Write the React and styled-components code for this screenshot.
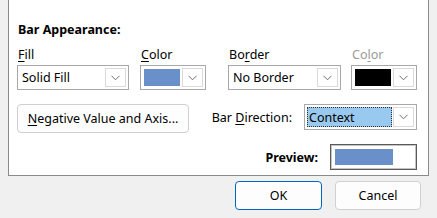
import React from "react";
import styled, { createGlobalStyle } from "styled-components";

const Global = createGlobalStyle`
  html, body { margin: 0; padding: 0; background: #f0f0f0; }
  body { font-family: "Segoe UI", "Noto Sans", "Open Sans", sans-serif; font-size: 12px; color: #000; }
`;

const Window = styled.div`
  width: 437px;
  height: 218px;
  background: #f0f0f0;
  overflow: hidden;
`;

const Panel = styled.div`
  margin-left: 8px;
  width: 421px;
  height: 176px;
  box-sizing: border-box;
  background: #fff;
  border: 1px solid #8a8a8a;
  border-top: none;
  padding: 22px 11px 0 8px;
  display: flex;
  flex-direction: column;
`;

const Heading = styled.div`
  font-weight: 700;
  font-size: 12.5px;
  line-height: 16px;
  margin-left: 1px;
`;

const FieldGrid = styled.div`
  display: grid;
  grid-template-columns: 123px 88px 123px 65px;
  margin-top: 9px;
`;

const Field = styled.div`
  display: flex;
  flex-direction: column;
  gap: 3px;
`;

const Label = styled.div`
  font-size: 12.5px;
  line-height: 15px;
  margin-left: 1px;
  color: ${(p) => (p.$disabled ? "#9a9a9a" : "#000")};
  u { text-decoration: underline; text-underline-offset: 2px; }
`;

const Combo = styled.div`
  width: ${(p) => p.$w}px;
  height: ${(p) => p.$h || 25}px;
  box-sizing: border-box;
  border: 1px solid #a8a8a8;
  background: #fff;
  display: flex;
  align-items: stretch;
  padding: 2px;
  gap: 1px;
`;

const ComboText = styled.div`
  flex: 1;
  display: flex;
  align-items: center;
  padding-left: 2px;
  font-size: 12.5px;
  white-space: nowrap;
  box-sizing: border-box;
  ${(p) =>
    p.$selected &&
    `background: #99c9ef; outline: 1px dotted #333; outline-offset: -1px;`}
`;

const Swatch = styled.div`
  flex: 1;
  background: ${(p) => p.$color};
  margin: 1px;
`;

const DropBtn = styled.div`
  width: 21px;
  box-sizing: border-box;
  border: 1px solid #dadada;
  display: flex;
  align-items: center;
  justify-content: center;
`;

const Chevron = () => (
  <svg width="9" height="6" viewBox="0 0 9 6">
    <path d="M0.5 0.8 L4.5 4.8 L8.5 0.8" fill="none" stroke="#6d6d6d" strokeWidth="1" />
  </svg>
);

const Row = styled.div`
  display: flex;
  align-items: flex-start;
  justify-content: space-between;
  margin-top: 14px;
`;

const PushButton = styled.button`
  width: ${(p) => p.$w}px;
  height: 29px;
  box-sizing: border-box;
  background: #fdfdfd;
  border: 1px solid ${(p) => (p.$default ? "#0067c0" : "#d0d0d0")};
  border-radius: 4px;
  font-family: inherit;
  font-size: 12.5px;
  color: #000;
  padding: 0;
  margin: 0;
  u { text-decoration: underline; text-underline-offset: 2px; }
`;

const RightGroup = styled.div`
  display: flex;
  align-items: center;
  gap: 12px;
`;

const InlineLabel = styled.span`
  font-size: 12.5px;
  u { text-decoration: underline; text-underline-offset: 2px; }
`;

const PreviewRow = styled.div`
  display: flex;
  justify-content: flex-end;
  align-items: center;
  gap: 12px;
  margin-top: 11px;
`;

const BoldLabel = styled.span`
  font-weight: 700;
  font-size: 12.5px;
`;

const PreviewBox = styled.div`
  width: 87px;
  height: 26px;
  box-sizing: border-box;
  border: 1px solid #5a5a5a;
  box-shadow: inset 0 0 0 1px #c4c4c4;
  background: #fff;
  padding: 4px;
`;

const PreviewBar = styled.div`
  width: 58px;
  height: 16px;
  background: #6a90c9;
`;

const Footer = styled.div`
  display: flex;
  justify-content: flex-end;
  gap: 13px;
  padding-right: 16px;
  margin-top: 5px;
`;

export default function App() {
  return (
    <Window>
      <Global />
      <Panel>
        <Heading>Bar Appearance:</Heading>
        <FieldGrid>
          <Field>
            <Label><u>F</u>ill</Label>
            <Combo $w={112}>
              <ComboText>Solid Fill</ComboText>
              <DropBtn><Chevron /></DropBtn>
            </Combo>
          </Field>
          <Field>
            <Label><u>C</u>olor</Label>
            <Combo $w={66}>
              <Swatch $color="#6a90c9" />
              <DropBtn><Chevron /></DropBtn>
            </Combo>
          </Field>
          <Field>
            <Label>Bo<u>r</u>der</Label>
            <Combo $w={113}>
              <ComboText>No Border</ComboText>
              <DropBtn><Chevron /></DropBtn>
            </Combo>
          </Field>
          <Field>
            <Label $disabled>Co<u>l</u>or</Label>
            <Combo $w={66}>
              <Swatch $color="#000" />
              <DropBtn><Chevron /></DropBtn>
            </Combo>
          </Field>
        </FieldGrid>
        <Row>
          <PushButton $w={172}><u>N</u>egative Value and Axis...</PushButton>
          <RightGroup>
            <InlineLabel>Bar <u>D</u>irection:</InlineLabel>
            <Combo $w={113} $h={26}>
              <ComboText $selected>Context</ComboText>
              <DropBtn><Chevron /></DropBtn>
            </Combo>
          </RightGroup>
        </Row>
        <PreviewRow>
          <BoldLabel>Preview:</BoldLabel>
          <PreviewBox><PreviewBar /></PreviewBox>
        </PreviewRow>
      </Panel>
      <Footer>
        <PushButton $w={87} $default>OK</PushButton>
        <PushButton $w={86}>Cancel</PushButton>
      </Footer>
    </Window>
  );
}
